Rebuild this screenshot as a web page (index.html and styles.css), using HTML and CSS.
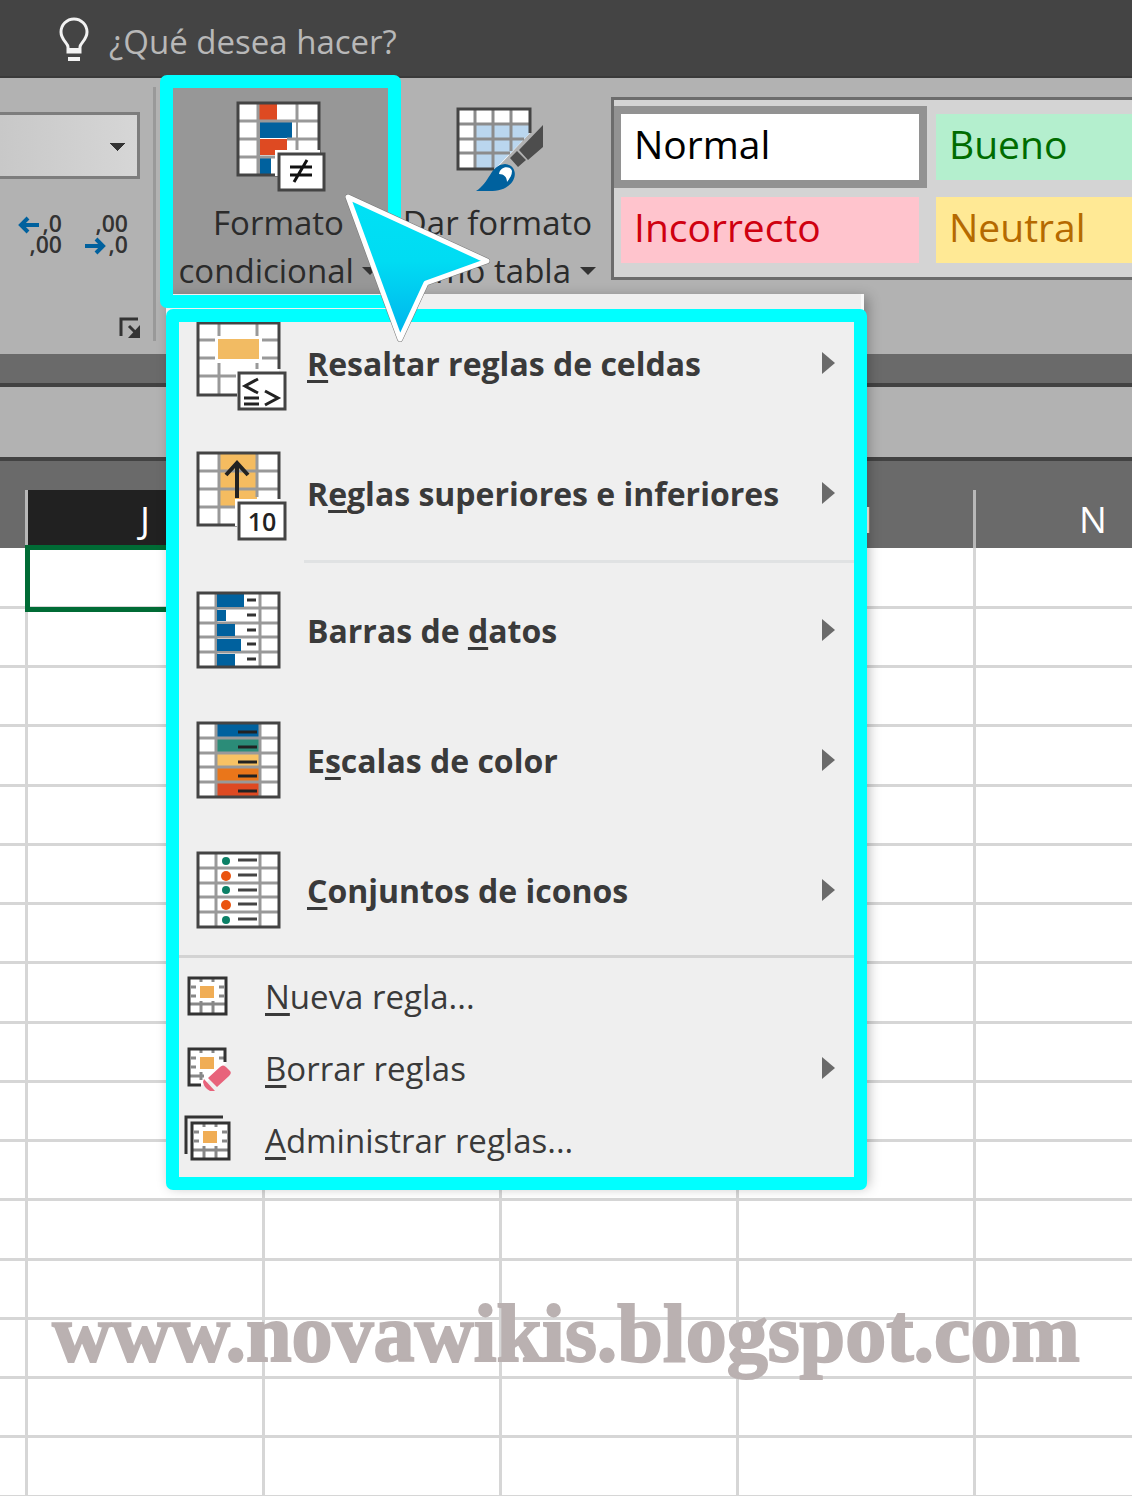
FILE: index.html
```html
<!DOCTYPE html>
<html lang="es">
<head>
<meta charset="utf-8">
<meta name="viewport" content="width=device-width, initial-scale=1">
<title>Formato condicional</title>
<link rel="stylesheet" href="styles.css">
</head>
<body>
<div class="app">
  <header class="titlebar">
    <svg class="bulb" width="34" height="46" viewBox="0 0 34 46" fill="none" stroke="#f2f2f2" stroke-width="3" aria-hidden="true">
      <path d="M11 34v-5c0-4-7-7-7-15a13 13 0 0 1 26 0c0 8-7 11-7 15v5z"/>
      <path d="M10 32h14M11 41h12" stroke-width="4"/>
    </svg>
    <input class="tellme" type="text" placeholder="¿Qué desea hacer?" aria-label="¿Qué desea hacer?">
  </header>

  <div class="ribbon">
    <section class="number-group">
      <select class="format-select" aria-label="Formato de número"><option></option></select>
      <div class="decimals">
        <button class="icon-button" aria-label="Aumentar decimales">
          <svg width="46" height="46" viewBox="0 0 46 46" aria-hidden="true">
            <path d="M3 13h18M10 6l-7 7 7 7" fill="none" stroke="#00619e" stroke-width="4"/>
            <text class="digits" x="44" y="20" text-anchor="end">,0</text>
            <text class="digits" x="44" y="41" text-anchor="end">,00</text>
          </svg>
        </button>
        <button class="icon-button" aria-label="Disminuir decimales">
          <svg width="46" height="46" viewBox="0 0 46 46" aria-hidden="true">
            <path d="M1 34h18M12 27l7 7-7 7" fill="none" stroke="#00619e" stroke-width="4"/>
            <text class="digits" x="44" y="20" text-anchor="end">,00</text>
            <text class="digits" x="44" y="41" text-anchor="end">,0</text>
          </svg>
        </button>
      </div>
      <button class="icon-button launcher" aria-label="Configuración de formato de número">
        <svg width="22" height="22" viewBox="0 0 22 22" fill="none" stroke="#333" stroke-width="3" aria-hidden="true">
          <path d="M2 19V2h17M10 9l8 8"/><path d="M21 8v13H9z" fill="#333" stroke="none"/>
        </svg>
      </button>
    </section>

    <div class="anchor">
      <button class="tool tool-active" aria-haspopup="menu" aria-expanded="true">
        <svg width="90" height="92" viewBox="0 0 90 92" aria-hidden="true">
          <path d="M1 2h81v72H1z" fill="#fff"/>
          <path d="M22 3h18v17H22zM22 38h28v16H22z" fill="#de4a22"/>
          <path d="M22 21h33v16H22zM22 56h12v17H22z" fill="#00619e"/>
          <path d="M21 2v72M60 2v18M60 38v12M2 20h80M2 38h20M50 38h32M2 56h40" fill="none" stroke="#999" stroke-width="3"/>
          <path d="M22 20v53M56 20h4v18h-4" fill="none" stroke="#999" stroke-width="2"/>
          <path d="M82 52V2H1v72h40" fill="none" stroke="#444" stroke-width="3"/>
          <path d="M38 49h45v6H42v20h-4z" fill="#fff"/>
          <path d="M42 53h45v36H42z" fill="#fff" stroke="#444" stroke-width="3"/>
          <path d="M53 66h22M53 74h22M70 59L57 81" fill="none" stroke="#111" stroke-width="3"/>
        </svg>
        <span class="tool-label">Formato<br>condicional <i class="caret"></i></span>
      </button>
      <div class="menu" role="menu">
        <button class="item" role="menuitem">
          <svg width="92" height="96" viewBox="0 0 92 96" aria-hidden="true">
            <path d="M2 8h81v72H2z" fill="#fff"/>
            <path d="M23 8v13M61 8v13M2 25h17M66 25h17M2 43h17M66 43h17M23 48v32M61 48v6M2 61h38" fill="none" stroke="#999" stroke-width="3"/>
            <path d="M22 24h41v20H22z" fill="#f2bb63"/>
            <path d="M83 54V8H2v72h39" fill="none" stroke="#444" stroke-width="3"/>
            <path d="M43 58h46v36H43z" fill="#fff" stroke="#444" stroke-width="3"/>
            <path d="M62 64l-13 7 13 7M48 83h15M48 89h15M69 76l13 7-13 7" fill="none" stroke="#222" stroke-width="3"/>
          </svg>
          <span class="item-label"><u>R</u>esaltar reglas de celdas</span>
          <i class="chevron"></i>
        </button>
        <button class="item" role="menuitem">
          <svg width="92" height="96" viewBox="0 0 92 96" aria-hidden="true">
            <path d="M2 8h81v72H2z" fill="#fff"/>
            <path d="M23 9h38v52H23z" fill="#f5bc60"/>
            <path d="M23 8v72M61 8v44M2 26h81M2 44h81M2 62h38" fill="none" stroke="#999" stroke-width="3"/>
            <path d="M83 54V8H2v72h39" fill="none" stroke="#444" stroke-width="3"/>
            <path d="M41 53V18M30 30l11-12 11 12" fill="none" stroke="#222" stroke-width="4"/>
            <path d="M39 54h45v5H43v22h-4z" fill="#fff"/>
            <path d="M43 58h46v36H43z" fill="#fff" stroke="#444" stroke-width="3"/>
            <text class="badge-number" x="66" y="86" text-anchor="middle">10</text>
          </svg>
          <span class="item-label">R<u>e</u>glas superiores e inferiores</span>
          <i class="chevron"></i>
        </button>
        <hr class="divider divider-inset">
        <button class="item" role="menuitem">
          <svg width="92" height="96" viewBox="0 0 92 96" aria-hidden="true">
            <path d="M2 11h81v74H2z" fill="#fff"/>
            <path d="M2 26h81M2 41h81M2 55h81M2 70h81M20 11v74M64 11v74" fill="none" stroke="#999" stroke-width="3"/>
            <path d="M21 11h27v14H21zM21 28h9v11H21zM21 42h18v12H21zM21 57h24v12H21zM21 72h18v13H21z" fill="#00619e"/>
            <path d="M51 18h9M51 33h9M51 48h9M51 62h9M51 77h9" fill="none" stroke="#333" stroke-width="3"/>
            <path d="M2 11h81v74H2z" fill="none" stroke="#444" stroke-width="3"/>
          </svg>
          <span class="item-label">Barras de <u>d</u>atos</span>
          <i class="chevron"></i>
        </button>
        <button class="item" role="menuitem">
          <svg width="92" height="96" viewBox="0 0 92 96" aria-hidden="true">
            <path d="M2 11h81v74H2z" fill="#fff"/>
            <path d="M21 11h42v15H21z" fill="#00619e"/><path d="M21 26h42v15H21z" fill="#2b8c78"/>
            <path d="M21 41h42v14H21z" fill="#f7c264"/><path d="M21 55h42v15H21z" fill="#ea761a"/>
            <path d="M21 70h42v15H21z" fill="#de4a22"/>
            <path d="M2 26h81M2 41h81M2 55h81M2 70h81M20 11v74M64 11v74" fill="none" stroke="#999" stroke-width="3"/>
            <path d="M42 20h19M42 35h19M42 50h19M42 64h19M42 79h19" fill="none" stroke="#222" stroke-width="3"/>
            <path d="M2 11h81v74H2z" fill="none" stroke="#444" stroke-width="3"/>
          </svg>
          <span class="item-label">E<u>s</u>calas de color</span>
          <i class="chevron"></i>
        </button>
        <button class="item" role="menuitem">
          <svg width="92" height="96" viewBox="0 0 92 96" aria-hidden="true">
            <path d="M2 11h81v74H2z" fill="#fff"/>
            <path d="M2 26h81M2 41h81M2 55h81M2 70h81M20 11v74M64 11v74" fill="none" stroke="#999" stroke-width="3"/>
            <path d="M42 18h19M42 33h19M42 48h19M42 62h19M42 77h19" fill="none" stroke="#444" stroke-width="3"/>
            <g fill="#0b8066"><circle cx="30" cy="19" r="4"/><circle cx="30" cy="48" r="4"/><circle cx="30" cy="78" r="4"/></g>
            <g fill="#ea5410"><circle cx="30" cy="34" r="5"/><circle cx="30" cy="63" r="5"/></g>
            <path d="M2 11h81v74H2z" fill="none" stroke="#444" stroke-width="3"/>
          </svg>
          <span class="item-label"><u>C</u>onjuntos de iconos</span>
          <i class="chevron"></i>
        </button>
        <hr class="divider">
        <button class="item item-small" role="menuitem">
          <svg width="50" height="50" viewBox="0 0 50 50" aria-hidden="true">
            <path d="M5 7h37v36H5z" fill="#fff"/>
            <path d="M17 8v3M29 8v3M7 16h5M35 16h5M7 25h5M35 25h5M6 33h35M17 30v12M29 30v12" fill="none" stroke="#888" stroke-width="3"/>
            <path d="M16 15h14v12H16z" fill="#f0ad55"/>
            <path d="M5 7h37v36H5z" fill="none" stroke="#333" stroke-width="3"/>
          </svg>
          <span class="item-label"><u>N</u>ueva regla...</span>
        </button>
        <button class="item item-small" role="menuitem">
          <svg width="50" height="50" viewBox="0 0 50 50" aria-hidden="true">
            <path d="M5 6h37v14L20 42H5z" fill="#fff"/>
            <path d="M17 7v3M29 7v3M7 15h5M35 15h5M7 24h5M6 33h14M17 29v8" fill="none" stroke="#888" stroke-width="3"/>
            <path d="M16 14h14v12H16z" fill="#f0ad55"/>
            <path d="M41 19V6H5v36h12" fill="none" stroke="#333" stroke-width="3"/>
            <path d="M36 24q3-3 6 0l4 4q2 2-1 5L33 44 24 35z" fill="#e8637b"/>
            <path d="M20 36l11 12h-5q-6-3-7-9z" fill="#e8637b"/>
          </svg>
          <span class="item-label"><u>B</u>orrar reglas</span>
          <i class="chevron"></i>
        </button>
        <button class="item item-small" role="menuitem">
          <svg width="50" height="50" viewBox="0 0 50 50" aria-hidden="true">
            <path d="M8 8h37v36H8z" fill="#fff"/>
            <path d="M20 9v3M32 9v3M10 17h5M38 17h5M10 26h5M38 26h5M9 35h35M20 31v12M32 31v12" fill="none" stroke="#888" stroke-width="3"/>
            <path d="M19 16h14v12H19z" fill="#f0ad55"/>
            <path d="M8 8h37v36H8zM2 39V2h37" fill="none" stroke="#333" stroke-width="3"/>
          </svg>
          <span class="item-label"><u>A</u>dministrar reglas...</span>
        </button>
        <div class="frame frame-menu"></div>
      </div>
      <div class="frame frame-tool"></div>
      <svg class="pointer" width="152" height="156" viewBox="0 0 152 156" aria-hidden="true">
        <defs><linearGradient id="pointer-fill" x1="0" y1="0" x2="0" y2="1"><stop offset="0" stop-color="#00e1f5"/><stop offset=".45" stop-color="#00dcf3"/><stop offset="1" stop-color="#00b2ec"/></linearGradient></defs>
        <path d="M6 6L145 70 84 92 58 148z" fill="url(#pointer-fill)" stroke="#777" stroke-width="6" stroke-linejoin="round"/>
        <path d="M6 6L145 70 84 92 58 148z" fill="url(#pointer-fill)" stroke="#fff" stroke-width="5" stroke-linejoin="round"/>
      </svg>
    </div>

    <button class="tool tool-wide" aria-haspopup="menu">
      <svg class="table-icon" width="90" height="92" viewBox="0 0 90 92" aria-hidden="true">
        <path d="M2 8h72v24L40 68H2z" fill="#fff"/>
        <path d="M20 23h53v10L40 67H20z" fill="#bad6ee"/>
        <path d="M19 8v60M37 8v60M55 8v42M2 23h72M2 38h66M2 52h52" fill="none" stroke="#8c8c8c" stroke-width="3"/>
        <path d="M74 32V8H2v60h36" fill="none" stroke="#444" stroke-width="3"/>
        <path d="M87 24v22L72 59l-9-10zM61 50l9 9-8 7-8-9z" fill="#4d4d4d"/>
        <path d="M20 90C34 82 34 64 49 63c12 1 13 15 3 22-7 6-18 5-32 5z" fill="#00619e"/>
        <path d="M43 73c1-8 11-9 13-3 0 5-3 8-5 11 0-5-3-8-8-8z" fill="#fff"/>
      </svg>
      <span class="tool-label">Dar formato<br>como tabla <i class="caret"></i></span>
    </button>

    <div class="gallery">
      <button class="style style-normal">Normal</button>
      <button class="style style-good">Bueno</button>
      <button class="style style-bad">Incorrecto</button>
      <button class="style style-neutral">Neutral</button>
    </div>
  </div>

  <div class="gap-band"></div>
  <div class="formula-bar"></div>

  <main class="sheet">
    <table class="cells">
      <colgroup><col class="col-edge"><col><col><col><col><col></colgroup>
      <thead><tr><th></th><th class="selected" scope="col">J</th><th scope="col" aria-label="K"></th><th scope="col" aria-label="L"></th><th scope="col">M</th><th scope="col">N</th></tr></thead>
      <tbody>
        <tr class="first-row"><td></td><td class="active-cell"></td><td></td><td></td><td></td><td></td></tr>
        <tr><td></td><td></td><td></td><td></td><td></td><td></td></tr>
        <tr><td></td><td></td><td></td><td></td><td></td><td></td></tr>
        <tr><td></td><td></td><td></td><td></td><td></td><td></td></tr>
        <tr><td></td><td></td><td></td><td></td><td></td><td></td></tr>
        <tr><td></td><td></td><td></td><td></td><td></td><td></td></tr>
        <tr><td></td><td></td><td></td><td></td><td></td><td></td></tr>
        <tr><td></td><td></td><td></td><td></td><td></td><td></td></tr>
        <tr><td></td><td></td><td></td><td></td><td></td><td></td></tr>
        <tr><td></td><td></td><td></td><td></td><td></td><td></td></tr>
        <tr><td></td><td></td><td></td><td></td><td></td><td></td></tr>
        <tr><td></td><td></td><td></td><td></td><td></td><td></td></tr>
        <tr><td></td><td></td><td></td><td></td><td></td><td></td></tr>
        <tr><td></td><td></td><td></td><td></td><td></td><td></td></tr>
        <tr><td></td><td></td><td></td><td></td><td></td><td></td></tr>
        <tr><td></td><td></td><td></td><td></td><td></td><td></td></tr>
      </tbody>
    </table>
    <p class="watermark">www.novawikis.blogspot.com</p>
  </main>
</div>
</body>
</html>
```
FILE: styles.css
```css
*, *::before, *::after { box-sizing: border-box; }

body {
  margin: 0;
  background: #fff;
  font-family: "Open Sans", "Noto Sans", sans-serif;
  font-size: 33px;
  color: #2b2b2b;
}

button, input, select {
  margin: 0;
  padding: 0;
  border: 0;
  background: none;
  color: inherit;
  font: inherit;
}

svg { display: block; flex: none; overflow: visible; }

.app {
  display: flex;
  flex-direction: column;
  height: 100vh;
  overflow: hidden;
}

/* Title bar */
.titlebar {
  display: flex;
  flex: none;
  align-items: center;
  gap: 18px;
  height: 78px;
  padding: 6px 57px 0;
  background: #444;
  border-bottom: 2px solid #3a3a3a;
}
.tellme { flex: 1; min-width: 0; height: 56px; color: #b8b8b8; }
.tellme::placeholder { color: #b8b8b8; opacity: 1; }

/* Ribbon */
.ribbon {
  position: relative;
  z-index: 2;
  display: flex;
  flex: none;
  align-items: flex-start;
  height: 276px;
  padding-top: 9px;
  background: #b2b2b2;
}
.number-group {
  display: flex;
  flex: none;
  flex-direction: column;
  width: 156px;
  height: 254px;
  margin-right: 17px;
  padding-top: 25px;
  border-right: 3px solid #999;
}
.format-select {
  width: 140px;
  height: 67px;
  border: solid #7d7d7d;
  border-width: 3px 3px 3px 0;
  appearance: none;
  background:
    linear-gradient(135deg, #333 50%, transparent 50%) 118px 28px / 8px 8px no-repeat,
    linear-gradient(225deg, #333 50%, transparent 50%) 110px 28px / 8px 8px no-repeat,
    linear-gradient(90deg, #c8c8c8, #d6d6d6);
}
.decimals { display: flex; gap: 20px; padding: 33px 0 0 18px; }
.launcher { align-self: flex-end; margin: 59px 12px 0 0; }
.icon-button { flex: none; }
.digits { font: 600 23px "Open Sans", sans-serif; fill: #333; }
.badge-number { font: 600 25px "Open Sans", sans-serif; fill: #222; }

.anchor { position: relative; flex: none; }
.tool {
  display: flex;
  flex: none;
  flex-direction: column;
  align-items: center;
  width: 217px;
  height: 207px;
  padding-top: 14px;
}
.tool-wide { width: 221px; }
.tool-active { background: #979797; }
.tool-label { margin-top: 6px; padding-right: 6px; line-height: 48px; white-space: nowrap; }
.caret {
  display: inline-block;
  border: solid transparent;
  border-width: 8px 8px 0;
  border-top-color: #333;
  vertical-align: 8px;
}

.gallery {
  display: grid;
  flex: 1;
  grid-template-columns: 298px 298px;
  gap: 17px;
  min-width: 0;
  height: 183px;
  margin-top: 10px;
  padding: 14px 7px;
  overflow: hidden;
  border: 3px solid #6c6c6c;
  border-right: 0;
  background: #d4d4d4;
}
.style {
  padding: 0 13px 6px;
  height: 66px;
  font-size: 39px;
  line-height: 60px;
  text-align: left;
}
.style-normal { background: #fff; color: #000; outline: 8px solid #929292; }
.style-good { background: #b4efce; color: #006c00; }
.style-bad { background: #ffc4cd; color: #cf0010; }
.style-neutral { background: #ffe995; color: #b56a00; }

/* Drop-down menu */
.menu {
  position: absolute;
  top: 207px;
  left: -7px;
  width: 698px;
  padding: 4px 0 8px;
  border-right: 3px solid #fafafa;
  background: #efefef;
  box-shadow: 4px 3px 12px rgba(0, 0, 0, .3);
}
.item {
  display: flex;
  align-items: center;
  gap: 19px;
  width: 100%;
  height: 130px;
  padding: 0 26px 0 30px;
  font-size: 32px;
  font-weight: 700;
  text-align: left;
  white-space: nowrap;
  color: #3a3a3a;
}
.item-small {
  gap: 31px;
  height: 72px;
  padding-left: 18px;
  font-size: 33px;
  font-weight: 400;
}
.item-label { flex: 1; }
u { text-decoration-thickness: 3px; text-underline-offset: 4px; text-decoration-skip-ink: none; }
.chevron {
  border: solid transparent;
  border-width: 11px 0 11px 13px;
  border-left-color: #6a6a6a;
}
.divider { height: 3px; margin: 0 0 2px; border: 0; background: #d3d3d3; }
.divider-inset { margin: 2px 0 2px 138px; background: #e0e2e3; }

/* Annotations over the screen */
.frame { position: absolute; border: 13px solid #0ff; border-radius: 7px; pointer-events: none; }
.frame-menu { inset: 15px -6px -6px 0; }
.frame-tool { top: -12px; left: -13px; width: 241px; height: 233px; }
.pointer { position: absolute; top: 104px; left: 169px; pointer-events: none; }

/* Worksheet */
.gap-band { flex: none; height: 33px; background: #6a6a6a; border-bottom: 4px solid #424242; }
.formula-bar { flex: none; height: 74px; background: #b2b2b2; border-bottom: 4px solid #424242; }
.sheet {
  position: relative;
  flex: 1;
  min-height: 0;
  padding-top: 29px;
  overflow: hidden;
  background: linear-gradient(#6a6a6a 60px, #fff 0);
}
.cells { width: 1213px; table-layout: fixed; border-collapse: separate; border-spacing: 0; }
.col-edge { width: 28px; }
th {
  height: 58px;
  padding: 0;
  border-right: 3px solid #b8b8b8;
  font-size: 37px;
  line-height: 50px;
  font-weight: 400;
  color: #fff;
  background: #6a6a6a;
}
.selected { background: #212121; }
td { height: 59px; padding: 0; border: solid #d6d6d6; border-width: 0 3px 3px 0; }
tr:nth-child(4n) td { height: 60px; }
.first-row td { height: 61px; }
.active-cell { outline: 5px solid #006b35; outline-offset: -2px; }
.watermark {
  position: absolute;
  bottom: 117px;
  left: 0;
  right: 0;
  margin: 0;
  font: bold 82px/90px "Liberation Serif", serif;
  text-align: center;
  color: #bab1b1;
  -webkit-text-stroke: 2px #bab1b1;
}
```
